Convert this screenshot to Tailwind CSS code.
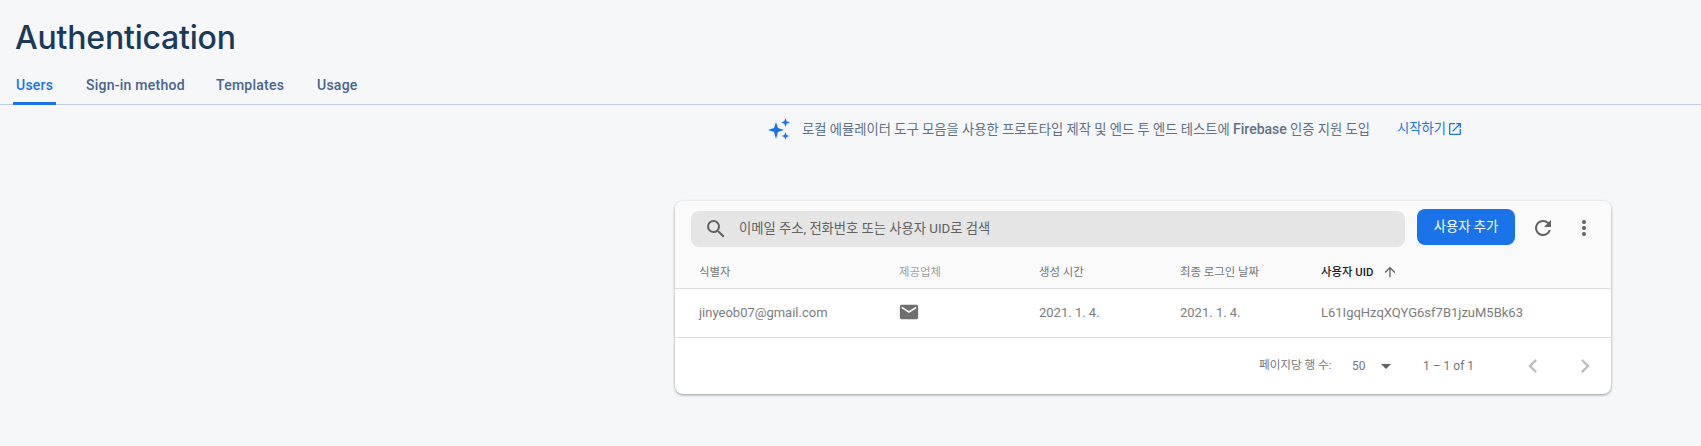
<!DOCTYPE html>
<html lang="ko">

<head>
  <meta charset="UTF-8">
  <meta name="viewport" content="width=device-width, initial-scale=1.0">
  <title>Authentication</title>
  <script src="https://cdn.jsdelivr.net/npm/@tailwindcss/browser@4"></script>
</head>

<body class="h-[446px] overflow-hidden bg-[#f6f7f9] font-['Roboto','Noto_Sans_CJK_KR',sans-serif]">
  <header class="h-[105px] border-b border-[#bdd0e4]">
    <h1 class="pl-[15px] pt-[17px] font-['Inter','Roboto',sans-serif] text-[32px] font-medium leading-[42px] tracking-[-0.2px] text-[#1a3a5a]">Authentication</h1>
    <nav class="mt-[11px] flex pl-[13px] text-[14px] font-medium leading-[30px] tracking-[0.25px] text-[#47658c]">
      <a class="h-[35px] w-[43px] border-b-[3px] border-[#1a73e8] pl-[3px] text-[#1a73e8]">Users</a>
      <a class="ml-[27px] w-[130px] pl-[3px]">Sign-in method</a>
      <a class="w-[101px] pl-[3px]">Templates</a>
      <a class="pl-[3px]">Usage</a>
    </nav>
  </header>

  <!-- 에뮬레이터 배너 -->
  <div class="ml-[767px] mt-[10px] flex h-[28px] items-center text-[13.3px] text-[#5f7285]">
    <svg class="h-[24px] w-[24px]" viewBox="0 0 24 24" fill="#1a73e8">
      <path d="M9 5l2 6 6 2-6 2-2 7-2-7-6-2 6-2z" />
      <path d="M18.5 1l1.2 3.3L23 5.5l-3.3 1.2L18.5 10l-1.200-3.300L14 5.500l3.300-1.200z" />
      <path d="M18.500 15l1.100 2.900 2.900 1.100-2.900 1.100-1.100 2.900-1.100-2.900-2.900-1.100 2.900-1.100z" />
    </svg>
    <span class="ml-[11px] w-[595px] whitespace-nowrap">로컬 에뮬레이터 도구 모음을 사용한 프로토타입 제작 및 엔드 투 엔드 테스트에 <span class="text-[14px] font-medium">Firebase</span> 인증 지원 도입</span>
    <a class="flex items-center text-[#1a73e8]">시작하기
      <svg class="ml-[1px] h-[16px] w-[16px]" viewBox="0 0 24 24" fill="#1a73e8">
        <path d="M19 19H5V5h7V3H5a2 2 0 0 0-2 2v14a2 2 0 0 0 2 2h14a2 2 0 0 0 2-2v-7h-2v7zM14 3v2h3.590l-9.830 9.830 1.410 1.410L19 6.410V10h2V3h-7z" />
      </svg>
    </a>
  </div>

  <section class="ml-[675px] mt-[58px] h-[193px] w-[936px] overflow-hidden rounded-[8px] bg-white shadow-[0_1px_3px_rgba(0,0,0,0.4)]">
    <div class="h-[88px] border-b border-[#dcdcdc] bg-[#fafafa]">
      <div class="flex h-[56px] items-center pl-[16px]">
        <div class="flex h-[36px] w-[714px] items-center rounded-[8px] bg-[#e5e5e5] pl-[13px] text-[13.3px] text-[#616161]">
          <svg class="h-[24px] w-[24px]" viewBox="0 0 24 24" fill="#616161">
            <path d="M15.500 14h-.79l-.28-.27A6.470 6.470 0 0 0 16 9.500 6.500 6.500 0 1 0 9.500 16c1.610 0 3.090-.59 4.230-1.570l.27.28v.79l5 4.990L20.490 19l-4.990-5zm-6 0C7.010 14 5 11.990 5 9.500S7.010 5 9.500 5 14 7.010 14 9.500 11.990 14 9.500 14z" />
          </svg>
          <span class="ml-[11px]">이메일 주소, 전화번호 또는 사용자 UID로 검색</span>
        </div>
        <button class="ml-[12px] mt-[-4px] h-[36px] w-[98px] rounded-[8px] bg-[#1a73e8] text-[13.3px] text-white">사용자 추가</button>
        <svg class="ml-[16px] mt-[-2px] h-[24px] w-[24px]" viewBox="0 0 24 24" fill="#616161">
          <path d="M17.650 6.350A7.958 7.958 0 0 0 12 4a8 8 0 1 0 7.730 10h-2.080A5.990 5.990 0 0 1 12 18a6 6 0 1 1 0-12c1.660 0 3.140.69 4.220 1.780L13 11h7V4l-2.350 2.350z" />
        </svg>
        <svg class="ml-[17px] mt-[-2px] h-[24px] w-[24px]" viewBox="0 0 24 24" fill="#616161">
          <path d="M12 8a2 2 0 1 0 0-4 2 2 0 0 0 0 4zm0 2a2 2 0 1 0 0 4 2 2 0 0 0 0-4zm0 6a2 2 0 1 0 0 4 2 2 0 0 0 0-4z" />
        </svg>
      </div>
      <div class="grid h-[31px] grid-cols-[185px_155px_141px_141px_1fr] items-center pl-[24px] text-[11.4px] text-[#757575]">
        <span>식별자</span>
        <span class="pl-[15px] text-[#9e9e9e]">제공업체</span>
        <span>생성 시간</span>
        <span>최종 로그인 날짜</span>
        <span class="flex items-center font-medium text-[#212121]">사용자 UID
          <svg class="ml-[9px] h-[16px] w-[16px]" viewBox="0 0 24 24" fill="#616161">
            <path d="M4 12l1.410 1.410L11 7.830V20h2V7.830l5.580 5.590L20 12l-8-8-8 8z" />
          </svg>
        </span>
      </div>
    </div>
    <div class="grid h-[49px] grid-cols-[185px_155px_141px_141px_1fr] items-center border-b border-[#dcdcdc] pl-[24px] text-[13px] text-[#7c7c7c]">
      <span>jinyeob07@gmail.com</span>
      <svg class="ml-[14px] mt-[-2px] h-[22px] w-[22px]" viewBox="0 0 24 24" fill="#6f6f6f">
        <path d="M20 4H4a2 2 0 0 0-2 2v12a2 2 0 0 0 2 2h16a2 2 0 0 0 2-2V6a2 2 0 0 0-2-2zm0 4l-8 5-8-5V6l8 5 8-5v2z" />
      </svg>
      <span>2021. 1. 4.</span>
      <span>2021. 1. 4.</span>
      <span>L61IgqHzqXQYG6sf7B1jzuM5Bk63</span>
    </div>
    <div class="flex h-[56px] items-center text-[11.6px] text-[#757575]">
      <span class="ml-[584px] w-[93px]">페이지당 행 수:</span>
      <span class="w-[22px] text-[12px]">50</span>
      <svg class="h-[24px] w-[24px]" viewBox="0 0 24 24" fill="#616161">
        <path d="M7 10l5 5 5-5z" />
      </svg>
      <span class="ml-[25px] w-[96px] text-[12px]">1 – 1 of 1</span>
      <svg class="h-[28px] w-[28px]" viewBox="0 0 24 24" fill="#bdbdbd">
        <path d="M15.410 7.410L14 6l-6 6 6 6 1.410-1.410L10.830 12z" />
      </svg>
      <svg class="ml-[24px] h-[28px] w-[28px]" viewBox="0 0 24 24" fill="#bdbdbd">
        <path d="M10 6L8.590 7.410 13.170 12l-4.580 4.590L10 18l6-6z" />
      </svg>
    </div>
  </section>
</body>

</html>
